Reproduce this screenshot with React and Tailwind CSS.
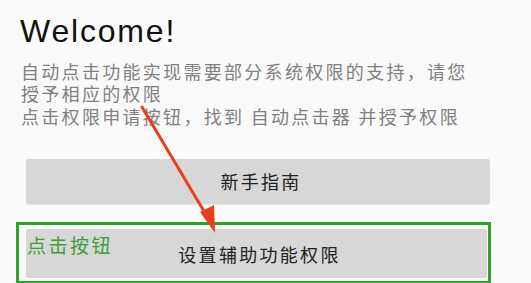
import React from "react";

const cjk = "font-['Noto_Sans_CJK_SC','Noto_Sans',sans-serif]";

export default function App() {
  return (
    <div className="relative h-[283px] w-[531px] overflow-hidden bg-[#fafafa]">
      {/* 标题 */}
      <h1 className="ml-[20px] pt-[12px] font-['Liberation_Sans',Arial,sans-serif] text-[32px] leading-[38px] tracking-[1.8px] text-[#111]">
        Welcome!
      </h1>

      {/* 说明文字 */}
      <div className={`ml-[21px] mt-[10px] flex w-[460px] flex-col gap-[1px] text-[18px] leading-[22px] tracking-[2.3px] text-[#808080] ${cjk}`}>
        <p>自动点击功能实现需要部分系统权限的支持，请您授予相应的权限</p>
        <p>点击权限申请按钮，找到 自动点击器 并授予权限</p>
      </div>

      {/* 新手指南 */}
      <button
        className={`ml-[26px] mt-[32px] flex h-[45px] w-[464px] items-center justify-center rounded-[2px] bg-[#d7d7d7] pl-[6px] text-[18px] tracking-[2.3px] text-[#222] shadow-[0_1px_1px_rgba(0,0,0,0.08)] ${cjk}`}
      >
        新手指南
      </button>

      {/* 标注框 */}
      <div className="relative ml-[16px] mt-[18px] h-[62px] w-[475px] border-[3px] border-[#2aa52a] pl-[7px] pr-[1px] pt-[4px]">
        <div className={`flex h-[49px] w-full items-center justify-center rounded-[2px] bg-[#d7d7d7] pl-[6px] pt-[2px] text-[18px] tracking-[2.3px] text-[#222] ${cjk}`}>
          设置辅助功能权限
        </div>
        <span className={`absolute left-[8px] top-[8px] text-[19px] leading-[24px] tracking-[2.5px] text-[#3c9e3c] ${cjk}`}>
          点击按钮
        </span>
      </div>

      {/* 红色箭头 */}
      <svg className="absolute left-0 top-0" width="531" height="283" viewBox="0 0 531 283">
        <line x1="142" y1="107" x2="208" y2="218" stroke="#e8401f" strokeWidth="3" strokeLinecap="round" />
        <polygon points="215,233 200,212 214,205" fill="#e8401f" />
      </svg>
    </div>
  );
}
